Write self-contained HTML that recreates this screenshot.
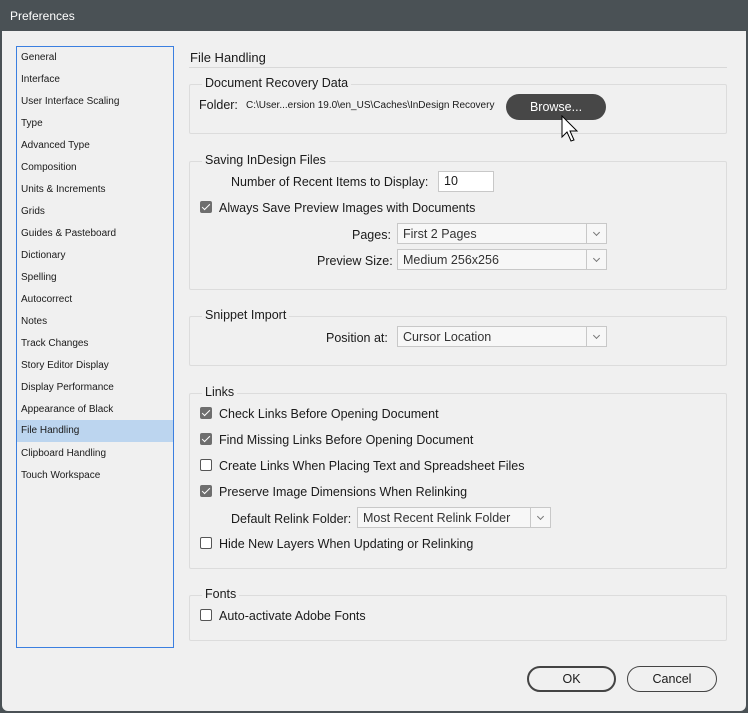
<!DOCTYPE html>
<html><head><style>
*{margin:0;padding:0;box-sizing:border-box}
body{width:748px;height:713px;background:#4a5155;font-family:"Liberation Sans",sans-serif;color:#1a1a1a;position:relative;overflow:hidden}
.win{position:absolute;left:2px;top:31px;width:744px;height:680px;background:#f0f0f0;border-radius:0 0 6px 6px}
.t{position:absolute;white-space:nowrap}
.title{left:10px;top:9px;color:#fff;font-size:12px}
.side{position:absolute;left:16px;top:46px;width:158px;height:602px;border:1px solid #3b7fe0;background:#f0f0f0}
.side div{position:absolute;left:4px;font-size:10px;height:22px;line-height:22px}
.sel{background:#bcd5ef;left:0!important;width:156px;padding-left:4px}
.grp{position:absolute;left:189px;width:538px;border:1px solid #dcdcdc;border-radius:2px}
.leg{position:absolute;left:12px;top:-9px;background:#f0f0f0;padding:0 3px;font-size:12.5px}
.f{font-size:12.5px}
.cb{position:absolute;width:12px;height:12px;border:1px solid #555;border-radius:2px;background:#fff}
.cb.on{background:#6e6e6e;border-color:#6e6e6e}
.cb.on:after{content:"";position:absolute;left:3px;top:0px;width:3px;height:7px;border:solid #fff;border-width:0 1.5px 1.5px 0;transform:rotate(45deg)}
.dd{position:absolute;height:21px;border:1px solid #c8c8c8;background:#f7f7f7;font-size:12.5px;line-height:20px;padding-left:5px;color:#333}
.dd:after{content:"";position:absolute;right:0;top:0;width:19px;height:19px;border-left:1px solid #c8c8c8}
.dd i{position:absolute;right:7px;top:6px;width:5px;height:5px;border:solid #777;border-width:0 1px 1px 0;transform:rotate(45deg)}
.btn{position:absolute;height:26px;border:1.5px solid #444;border-radius:13px;text-align:center;line-height:23px;font-size:12.5px}
</style></head><body>
<div class="t title">Preferences</div>
<div class="win"></div>
<div class="side">
<div style="top:0">General</div><div style="top:22px">Interface</div><div style="top:44px">User Interface Scaling</div><div style="top:66px">Type</div><div style="top:88px">Advanced Type</div><div style="top:110px">Composition</div><div style="top:132px">Units &amp; Increments</div><div style="top:154px">Grids</div><div style="top:176px">Guides &amp; Pasteboard</div><div style="top:198px">Dictionary</div><div style="top:220px">Spelling</div><div style="top:242px">Autocorrect</div><div style="top:264px">Notes</div><div style="top:286px">Track Changes</div><div style="top:308px">Story Editor Display</div><div style="top:330px">Display Performance</div><div style="top:352px">Appearance of Black</div><div class="sel" style="top:373px">File Handling</div><div style="top:396px">Clipboard Handling</div><div style="top:418px">Touch Workspace</div>
</div>
<div class="t f" style="left:190px;top:50px;font-size:13px">File Handling</div>
<div style="position:absolute;left:189px;top:67px;width:538px;height:1px;background:#d8d8d8"></div>

<div class="grp" style="top:84px;height:50px"><div class="leg">Document Recovery Data</div></div>
<div class="t f" style="left:199px;top:98px">Folder:</div>
<div class="t" style="left:246px;top:100px;font-size:10px">C:\User...ersion 19.0\en_US\Caches\InDesign Recovery</div>
<div style="position:absolute;left:506px;top:94px;width:100px;height:26px;background:#474747;border-radius:13px;color:#fff;font-size:12.5px;text-align:center;line-height:26px">Browse...</div>
<svg style="position:absolute;left:561px;top:115px" width="20" height="32" viewBox="0 0 20 32"><path d="M1 1 L1 22 L6 17 L10 26 L13 25 L9 16 L16 16 Z" fill="#fff" stroke="#000" stroke-width="1"/></svg>

<div class="grp" style="top:161px;height:129px"><div class="leg">Saving InDesign Files</div></div>
<div class="t f" style="left:231px;top:175px">Number of Recent Items to Display:</div>
<div style="position:absolute;left:438px;top:171px;width:56px;height:21px;border:1px solid #c8c8c8;background:#fff;font-size:12.5px;padding-left:5px;line-height:19px">10</div>
<div class="cb on" style="left:200px;top:201px"></div><div class="t f" style="left:219px;top:201px">Always Save Preview Images with Documents</div>
<div class="t f" style="left:352px;top:228px">Pages:</div>
<div class="dd" style="left:397px;top:223px;width:210px">First 2 Pages<i></i></div>
<div class="t f" style="left:317px;top:254px">Preview Size:</div>
<div class="dd" style="left:397px;top:249px;width:210px">Medium 256x256<i></i></div>

<div class="grp" style="top:316px;height:50px"><div class="leg">Snippet Import</div></div>
<div class="t f" style="left:326px;top:331px">Position at:</div>
<div class="dd" style="left:397px;top:326px;width:210px">Cursor Location<i></i></div>

<div class="grp" style="top:393px;height:176px"><div class="leg">Links</div></div>
<div class="cb on" style="left:200px;top:407px"></div><div class="t f" style="left:219px;top:407px">Check Links Before Opening Document</div>
<div class="cb on" style="left:200px;top:433px"></div><div class="t f" style="left:219px;top:433px">Find Missing Links Before Opening Document</div>
<div class="cb" style="left:200px;top:459px"></div><div class="t f" style="left:219px;top:459px">Create Links When Placing Text and Spreadsheet Files</div>
<div class="cb on" style="left:200px;top:485px"></div><div class="t f" style="left:219px;top:485px">Preserve Image Dimensions When Relinking</div>
<div class="t f" style="left:231px;top:512px">Default Relink Folder:</div>
<div class="dd" style="left:357px;top:507px;width:194px">Most Recent Relink Folder<i></i></div>
<div class="cb" style="left:200px;top:537px"></div><div class="t f" style="left:219px;top:537px">Hide New Layers When Updating or Relinking</div>

<div class="grp" style="top:595px;height:46px"><div class="leg">Fonts</div></div>
<div class="cb" style="left:200px;top:609px"></div><div class="t f" style="left:219px;top:609px">Auto-activate Adobe Fonts</div>

<div class="btn" style="left:527px;top:666px;width:89px;border-width:2px">OK</div>
<div class="btn" style="left:627px;top:666px;width:90px;border-width:1px;line-height:24px">Cancel</div>
</body></html>
